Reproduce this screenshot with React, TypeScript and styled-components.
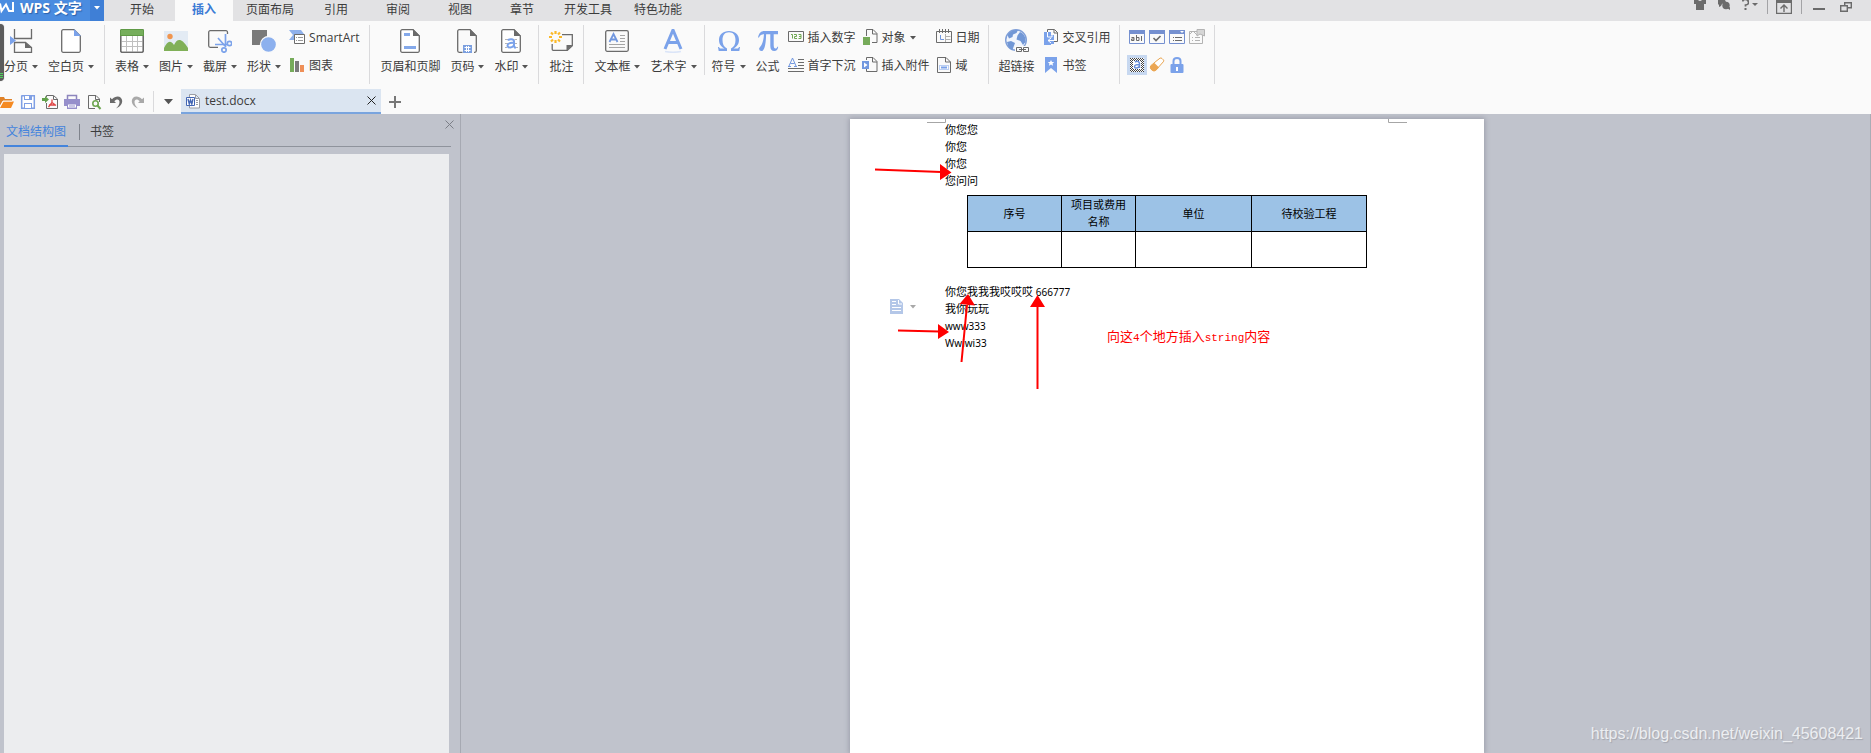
import React from "react";
import styled, { createGlobalStyle } from "styled-components";

const GlobalStyle = createGlobalStyle`
  * { box-sizing: border-box; }
  body {
    margin: 0;
    font-family: "Open Sans", "Noto Sans CJK SC", sans-serif;
    font-size: 12px;
    color: #3c3c3c;
  }
  button {
    font: inherit;
    color: inherit;
    border: 0;
    background: none;
    padding: 0;
    white-space: nowrap;
  }
  svg { display: block; flex: none; }
`;

const Shell = styled.div`
  position: relative;
  display: flex;
  flex-direction: column;
  min-height: 100vh;
  overflow: hidden;
  background: #c0c3cc;
`;

/* ---------- menu bar ---------- */

const MenuBar = styled.header`
  display: flex;
  height: 21px;
  background: #e2e2e4;
`;

const Brand = styled.button`
  display: flex;
  gap: 6px;
  width: 90px;
  height: 21px;
  background: #4a8ce0;
  color: #fff;
  font-size: 14px;
  font-weight: 700;
  line-height: 16px;
  text-shadow: 1px 1px 1px #2b62ab;
`;

const BrandMenu = styled.button`
  display: flex;
  justify-content: center;
  width: 14px;
  height: 21px;
  padding-top: 6px;
  background: #3f7fd6;
`;

const Tabs = styled.nav`
  display: flex;
  flex: 1;
  gap: 4px;
  padding-left: 9px;
`;

const Tab = styled.button<{ $active?: boolean; $wide?: boolean }>`
  width: ${(p) => (p.$wide ? 66 : 58)}px;
  height: 21px;
  padding-bottom: 1px;
  line-height: 20px;
  background: ${(p) => (p.$active ? "#fafafa" : "transparent")};
  color: ${(p) => (p.$active ? "#3a7bd5" : "#3c3c3c")};
  font-weight: ${(p) => (p.$active ? 700 : 400)};
`;

const WindowTools = styled.div`
  display: flex;
  align-items: flex-start;
  padding-right: 19px;
  color: #6b6b6b;
`;

const ToolButton = styled.button<{ $before: number }>`
  display: flex;
  gap: 3px;
  margin-left: ${(p) => p.$before}px;
`;

const ToolDivider = styled.span`
  width: 1px;
  height: 14px;
  margin-left: 9px;
  background: #a3a3a6;
`;

/* ---------- ribbon ---------- */

const Ribbon = styled.div`
  display: flex;
  height: 68px;
  margin-left: -1px;
  padding-top: 4px;
  background: #fafafa;
`;

const Group = styled.div<{ $left?: number; $right?: number; $short?: boolean }>`
  display: flex;
  align-items: flex-start;
  height: ${(p) => (p.$short ? 50 : 59)}px;
  padding: 0 ${(p) => p.$right ?? 5}px 0 ${(p) => p.$left ?? 5}px;
  border-right: 1px solid #dadadc;
`;

const BigButton = styled.button`
  display: flex;
  flex-direction: column;
  align-items: center;
  gap: 4px;
  padding: 4px 5px 0;
`;

const Label = styled.span`
  display: flex;
  align-items: center;
  gap: 4px;
  padding-top: 1px;
  line-height: 18px;
`;

const Stack = styled.div`
  display: flex;
  flex-direction: column;
  gap: 8px;
  padding-top: 2px;
`;

const SmallButton = styled.button`
  display: flex;
  align-items: center;
  gap: 4px;
  height: 20px;
  padding: 0 3px;
`;

const IconGrid = styled.div`
  display: grid;
  grid-template-columns: repeat(4, 20px);
  gap: 8px 0;
  padding-top: 2px;
`;

const IconCell = styled.button<{ $on?: boolean }>`
  display: flex;
  align-items: center;
  justify-content: center;
  height: 20px;
  background: ${(p) => (p.$on ? "#c7d8f0" : "transparent")};
`;

const DockHandle = styled.div`
  position: absolute;
  left: 0;
  top: 24px;
  width: 4px;
  height: 57px;
  padding-top: 49px;
  border-radius: 0 4px 4px 0;
  background: #5c5c5c;
  box-shadow: 0 0 1px #888;
`;

/* ---------- quick access bar ---------- */

const QuickBar = styled.div`
  display: flex;
  align-items: center;
  height: 25px;
  background: #fafafa;
`;

const QuickTools = styled.div`
  display: flex;
  align-items: center;
  gap: 6px;
  padding-right: 7px;
`;

const QuickDivider = styled.span`
  width: 1px;
  height: 21px;
  background: #dadadc;
`;

const QuickMore = styled.button`
  padding: 0 8px 0 10px;
`;

const DocTab = styled.div`
  display: flex;
  align-items: center;
  width: 200px;
  height: 25px;
  padding: 0 5px;
  border-bottom: 2px solid #79a4de;
  background: #dbe5f1;
`;

const DocTabName = styled.button`
  display: flex;
  flex: 1;
  align-items: center;
  gap: 5px;
  padding-top: 1px;
  line-height: 22px;
`;

const AddTab = styled.button`
  padding-left: 8px;
`;

/* ---------- workspace ---------- */

const Workspace = styled.main`
  display: flex;
  flex: 1;
`;

const SidePanel = styled.aside`
  display: flex;
  flex-direction: column;
  width: 461px;
  border-right: 1px solid #a6a9b2;
`;

const SideHead = styled.div`
  display: flex;
  justify-content: space-between;
  height: 33px;
  margin: 0 9px 0 4px;
  border-bottom: 1px solid #8f939c;
`;

const SideTabs = styled.div`
  display: flex;
  align-items: flex-start;
`;

const SideTab = styled.button<{ $active?: boolean }>`
  height: 33px;
  padding: 3px 2px 0;
  line-height: 30px;
  color: ${(p) => (p.$active ? "#4484dc" : "#3c3c3c")};
  border-bottom: 2px solid ${(p) => (p.$active ? "#4484dc" : "transparent")};
`;

const SideDivider = styled.span`
  width: 1px;
  height: 16px;
  margin: 10px 8px 0 11px;
  background: #7f838c;
`;

const SideClose = styled.button`
  align-self: flex-start;
  margin-right: -3px;
  padding-top: 6px;
`;

const Outline = styled.div`
  flex: 1;
  margin: 7px 11px 0 4px;
  background: #ecedef;
`;

const Canvas = styled.section`
  position: relative;
  display: flex;
  flex: 1;
  justify-content: center;
  padding: 5px 0 0 3px;
  border-right: 1px solid #a9acb5;
`;

const Page = styled.article`
  position: relative;
  width: 634px;
  padding: 2px 95px 0;
  background: #fff;
  box-shadow: 0 0 5px 1px #9b9eaa;
  color: #000;
  font-size: 11px;
  font-family: "Noto Sans", "Noto Sans CJK SC", sans-serif;
`;

const Para = styled.p`
  height: 17px;
  margin: 0;
  line-height: 17px;
`;

const Latin = styled.span`
  font-size: 10px;
`;

const DocTable = styled.table`
  width: 400px;
  margin: 6px 0 15px 22px;
  border-collapse: collapse;
  table-layout: fixed;
  line-height: 17px;

  th, td {
    height: 36px;
    padding: 0 8px 1px;
    border: 1px solid #000;
    font-weight: 400;
    text-align: center;
  }
  th { height: 35px; background: #9cc2e6; }
`;

const Arrows = styled.svg`
  position: absolute;
  left: 0;
  top: 0;
`;

const PasteOptions = styled.button`
  position: absolute;
  left: 40px;
  top: 180px;
  display: flex;
  align-items: center;
  gap: 7px;
`;

const Note = styled.div`
  position: absolute;
  left: 257px;
  top: 207px;
  color: #f00;
  font-size: 13px;
  line-height: 20px;
  white-space: nowrap;
  font-family: "Noto Sans CJK SC", sans-serif;
`;

const NoteLatin = styled.span`
  font-size: 11px;
  font-family: "Liberation Mono", monospace;
`;

const Watermark = styled.div`
  position: absolute;
  right: 7px;
  bottom: 9px;
  color: #eceef1;
  font: 16px/20px "Liberation Sans", sans-serif;
  text-shadow: 1px 1px 1px #a3a6af;
`;

/* ---------- drawings ---------- */

const G = "#6b6b6b";
const B = "#7ba2ea";

const Caret = ({ color = "#555", w = 6 }: { color?: string; w?: number }) => (
  <svg width={w} height={w === 6 ? 4 : 6} viewBox="0 0 6 4"><path d="M0 0h6L3 3.5z" fill={color} /></svg>
);

const Big = ({ children }: { children: React.ReactNode }) => (
  <svg width="24" height="24" viewBox="0 0 24 24" fill="none" stroke={G} strokeWidth="1.3">{children}</svg>
);

const Sm = ({ children }: { children: React.ReactNode }) => (
  <svg width="16" height="16" viewBox="0 0 16 16" fill="none" stroke={G} strokeWidth="1">{children}</svg>
);

const FoldPage = ({ fold = G }: { fold?: string }) => (
  <>
    <path d="M15 .7H4.2a1.5 1.5 0 0 0-1.5 1.5v19.6a1.5 1.5 0 0 0 1.5 1.5h15.6a1.5 1.5 0 0 0 1.5-1.5V7z" fill="#fff" />
    <path d="M15 0v7h7z" fill={fold} stroke="none" />
  </>
);

const icons = {
  pageBreak: (
    <Big>
      <path d="M5.500 0v9.500h17V0M5.500 23.300V13.500h11l6 5v4.800z" />
      <path d="M16 13v6h6.500z" fill={G} stroke="none" />
      <path d="M1 7v9l6-4.500z" fill={B} stroke="none" />
    </Big>
  ),
  blank: <Big><FoldPage fold={B} /></Big>,
  table: (
    <Big>
      <rect x=".7" y=".7" width="22.6" height="22.6" rx="1.5" fill="#fff" />
      <path d="M1 12.500h22M1 17.500h22M6.500 7v16M12.500 7v16M17.500 7v16" stroke="#c0c0c0" strokeWidth="1" />
      <rect x=".7" y=".7" width="22.6" height="22.6" rx="1.5" />
      <path d="M1.500 0h21q1.500 0 1.500 1.500V7H0V1.500Q0 0 1.500 0z" fill="#5f9a46" stroke="none" />
      <path d="M1 1h22v5H1z" fill="#76ae5c" stroke="none" />
    </Big>
  ),
  picture: (
    <Big>
      <g stroke="none">
        <path d="M0 2h24v20H0z" fill="#e3ebf4" />
        <circle cx="6" cy="7.5" r="2.7" fill="#f0954f" />
        <path d="M0 22v-3c3-6 6-9 10-3 3-6 7-8 14 3v3z" fill="#80b058" />
      </g>
    </Big>
  ),
  capture: (
    <Big>
      <path d="M19.5 5V3.200a1.500 1.500 0 0 0-1.500-1.500H2.200a1.500 1.500 0 0 0-1.500 1.500v13.600a1.500 1.500 0 0 0 1.500 1.500H10" />
      <g stroke={B} strokeWidth="1.700">
        <path d="M17.500 5v13M7 15.500h12" />
        <path d="m10 9 7 8" />
        <circle cx="16" cy="21" r="2.200" />
        <circle cx="21.500" cy="14.500" r="2.200" />
      </g>
    </Big>
  ),
  shapes: (
    <Big>
      <path d="M0 1h15v15H0z" fill="#7a7a7a" stroke="none" />
      <circle cx="16.500" cy="15.500" r="8" fill="#8cb0ee" stroke="#fafafa" />
    </Big>
  ),
  headerFooter: (
    <Big>
      <FoldPage />
      <path d="M6 5.500h6M6 18.500h12" stroke="#84a9ea" strokeWidth="3" />
    </Big>
  ),
  pageNumber: (
    <Big>
      <path d="M7.500 23.300H4.200a1.500 1.500 0 0 1-1.500-1.500V2.200A1.500 1.500 0 0 1 4.200.7H15L21.300 7v14.800a1.500 1.500 0 0 1-1.500 1.500H19" />
      <path d="M15 0v7h7z" fill={G} stroke="none" />
      <path d="M8 16h9v8H8z" fill="#7b9fdf" stroke="none" />
      <path d="M11.500 17v6M13.500 17v6M9.500 18.500h6M9.500 21.500h6" stroke="#fff" strokeWidth="1" />
    </Big>
  ),
  watermark: (
    <Big>
      <FoldPage />
      <path d="M6 10.500h3M15.500 10.500H18M6 14.500h3M16 14.500h2M6 18.500h2M17 18.500h2" stroke="#b5b5b5" strokeWidth="1" />
      <path d="M9 11.500c1-1.500 6-2 6 1v6M15 14c-4-.500-6.500.500-6.500 2.500 0 3 5.500 2.500 6.500-.500M15 18.500h2" stroke={B} strokeWidth="2" />
    </Big>
  ),
  comment: (
    <Big>
      <path d="M13 5.700h10.300v11l-5 4.600H4.200a1 1 0 0 1-1-1V15" />
      <path d="M23.500 16h-6v6z" fill={G} stroke="none" />
      <path d="M6.500 2v3M6.500 11v3M0 8h3M10 8h3M2 3.500l2 2M9 10.500l2 2M11 3.500l-2 2M4 10.500l-2 2" stroke="#fbb929" strokeWidth="2.200" />
    </Big>
  ),
  textBox: (
    <Big>
      <rect x=".7" y="1.700" width="22.600" height="20.600" rx="1.500" />
      <path d="m4.500 13 4-8 4 8M6 10.500h5" stroke="#7197df" strokeWidth="1.800" />
      <path d="M15 6.500h5M15 9.500h5M15 12.500h5M4 15.500h16M4 18.500h16" stroke="#a5a5a5" strokeWidth="1" />
    </Big>
  ),
  wordArt: (
    <Big>
      <path d="M4 20 12 1l8 19M7 13.500h10" stroke={B} strokeWidth="3" />
      <path d="M4 22.500c5 1 11 1 16 0" stroke="#dbe5f8" strokeWidth="1.500" />
    </Big>
  ),
  omega: (
    <Big>
      <path
        d="M1 18h1c.5 1.300 1 1.500 2 1.500h3.500C3.500 17.500 2 14.500 2 11 2 5.500 6 2 12 2s10 3.500 10 9c0 3.500-1.500 6.500-5.500 8.500H20c1 0 1.500-.2 2-1.500h1l-.7 4H14v-2.500c3.200-1.500 4.500-4.500 4.500-8.500 0-5-2.500-7.700-6.500-7.700S5.500 6 5.500 11c0 4 1.300 7 4.500 8.500V22H1.700z"
        fill={B}
        stroke="none"
      />
    </Big>
  ),
  pi: (
    <Big>
      <path
        d="M2 8.500C3 4 5 2 8.500 2H22v3.300h-4.300V16c0 2.500.6 3.500 1.800 3.500 1 0 1.500-.7 1.700-1.800h1C22 20.500 20.500 22 18.300 22c-2.600 0-4-1.700-4-5V5.300h-4.200C10 13 9 22 5.500 22 4 22 3.200 21 3.200 20c0-2.500 3.800-2 4.800-14.700-2.500 0-4 .7-5 3.200z"
        fill={B}
        stroke="none"
      />
    </Big>
  ),
  link: (
    <Big>
      <circle cx="11" cy="11" r="10.300" fill="#f1f5fc" stroke="#7f9fd8" strokeWidth="1.400" />
      <path d="M2.500 6C5 2 9 .5 13 1l-1.500 3L8 5.500 7.500 8 4 9.500zM2 13l4-1 4 2-1.500 4-1 3C4.500 20 2.500 17 2 13zM15 3c4 1.500 6 5 5.500 10L18 16l-2.500-4-4-1.500 1-4z" fill="#7197d6" stroke="none" />
      <path d="M10 17h14v7H10z" fill="#fafafa" stroke="none" />
      <path d="M11.500 18.500h5v4h-5zM18.500 18.500h5v4h-5zM14 20.500h7" strokeWidth="1" />
    </Big>
  ),
  smartArt: (
    <Sm>
      <path d="M0 1h12l3 4H6v6H0l4-5z" fill="#8fb1ec" stroke="none" />
      <path d="M5.500 5.500h10v9h-10z" fill="#fff" />
      <path d="M7 8.500h1M9 8.500h5M7 11.500h1M9 11.500h5" stroke="#999" />
    </Sm>
  ),
  chart: (
    <Sm>
      <g stroke="none">
        <path d="M1 1h4v14H1z" fill="#76ab5a" />
        <path d="M6 4h4v11H6z" fill="#7b7b7b" />
        <path d="M11 8h4v7h-4z" fill="#ef8f57" />
      </g>
    </Sm>
  ),
  number: (
    <Sm>
      <path d="M.5 2.500h15v10H.5z" />
      <path d="M3 5.500h1.500v4M6 5.500h2.500v2H6.500v2H9M10.500 5.500h2.500v4h-2.500M11 7.500h2" stroke="#70a853" />
    </Sm>
  ),
  dropCap: (
    <Sm>
      <path d="M10 2.500h6M10 5.500h6M10 8.500h6M0 11.500h16M0 14.500h16" />
      <path d="M1 9 4.500 1 8 9M2.500 6.500h4M0 9.500h3M6 9.500h3" stroke="#7197df" />
    </Sm>
  ),
  object: (
    <Sm>
      <path d="M4.500 7V.5H11l4 4v9h-5M10.500 1v4H15" />
      <path d="M1 8h7v8H1z" fill="#76ab5a" stroke="none" />
    </Sm>
  ),
  attachment: (
    <Sm>
      <path d="M4.500 3V.5H11l4 4v10H4.500V12M10.500 1v4H15" />
      <path d="M0 4h7v8H0z" fill="#7298df" stroke="none" />
      <path d="m2 5.500 3.500 2.500L2 10.500z" fill="#fff" stroke="none" />
    </Sm>
  ),
  date: (
    <Sm>
      <path d="M.5 2.500h15v11H.5zM3.500 0v4M6.500 0v4M9.500 0v4M12.500 0v4" />
      <path d="M9.500 5v8M9.500 7.500h5M9.500 10.500h5" stroke="#b0b0b0" />
      <path d="M4.500 6v4.500H8" stroke="#7197df" />
    </Sm>
  ),
  field: (
    <Sm>
      <path d="M1.500 15.500V.5H10l4.500 4.500v10.500zM9.500 1v4h5" />
      <path d="M3.500 8.500h9v4h-9z" stroke={B} strokeDasharray="1 1" />
      <path d="M5 10.500h6" stroke={B} strokeWidth="2" />
    </Sm>
  ),
  crossRef: (
    <Sm>
      <path d="M1 3h7v13H1z" fill="#7ba2ea" stroke="none" />
      <path d="M4.500 3V.5h7l3 3v9H10" fill="#fafafa" />
      <path d="M11 1v3h4" />
      <path d="M4 3h4v3h3v9H4z" fill="#7ba2ea" stroke="none" />
      <path d="M5 11.500h9M8 9l-3 2.500L8 14" stroke="#fff" />
      <path d="M4.500 3v5H9V6" stroke="#fff" />
    </Sm>
  ),
  bookmark: (
    <Sm>
      <path d="M2 0h12v16l-6-5-6 5z" fill="#7ba2ea" stroke="none" />
      <path d="m8 3 1 2h2.200L9.500 6.500l.6 2.300L8 7.500 5.900 8.800l.6-2.300L4.800 5H7z" fill="#fff" stroke="none" />
    </Sm>
  ),
  fieldText: (
    <Sm>
      <path d="M.5 1.500h15v13H.5z" stroke="#7590d0" /><path d="M0 1h16v4H0z" fill="#7590d0" stroke="none" />
      <path d="M2.500 8.500H5v3H2.500V10H5M7.500 6v5.500H10v-3H7.500M12.500 7v5" />
    </Sm>
  ),
  fieldCheck: (
    <Sm>
      <path d="M.5 1.500h15v13H.5z" stroke="#7590d0" /><path d="M0 1h16v4H0z" fill="#7590d0" stroke="none" />
      <path d="m4.500 9 2.500 2.500L11.500 7" strokeWidth="1.600" />
    </Sm>
  ),
  fieldList: (
    <Sm>
      <path d="M.5 1.500h15v13H.5z" stroke="#7590d0" /><path d="M0 1h16v4H0z" fill="#7590d0" stroke="none" />
      <path d="M11 2h4l-2 2z" fill="#fff" stroke="none" />
      <path d="M4 8.500h1M6 8.500h7M4 11.500h1M6 11.500h7" />
    </Sm>
  ),
  properties: (
    <Sm>
      <g stroke="#b3b3b3">
        <path d="M.5 2.500h13v12H.5zM3 8.500h1M6 8.500h5M3 11.500h1M6 11.500h5" />
        <path d="M8 .5h7.500V7L11 5 8 7z" fill="#d6d6d6" />
        <path d="m1 5 3-3 4 4" />
      </g>
    </Sm>
  ),
  shading: (
    <Sm>
      <path d="M1 1h14v14H1z" fill="#fff" stroke="none" />
      <g stroke="#444" strokeDasharray="1 1">
        <path d="M1 1.500h14M2 2.500h13M1 3.500h14M2 12.500h13M1 13.500h14M2 14.500h13" />
        <path d="M1.500 5v8M2.500 4v9M3.500 5v8M12.500 4v9M13.500 5v8M14.500 4v9" />
      </g>
      <path d="M4 4h8v8H4z" fill="#fff" stroke="none" />
      <path d="M6 5c2-1.200 4.500-.6 4.500 1.500V11M10.500 7.500c-3 0-5 .5-5 2.200 0 2 4 1.800 5-.7" stroke="#6b8fd8" strokeWidth="1.500" />
    </Sm>
  ),
  eraser: (
    <Sm>
      <path d="M8 3.500 11 1.200q1-.700 2 .300l1.300 1.300q1 1 0 2L7 13q-2 2-4 0l-1-1q-1.500-2 0-3.500z" fill="#fff" stroke="#e9a44f" />
      <path d="M5.500 6 10 10.500 7 13.500q-2 1.500-4 0l-1.500-1.800q-1-1.700.5-3.200z" fill="#eba653" stroke="none" />
    </Sm>
  ),
  lock: (
    <Sm>
      <path d="M4.500 8V4q0-3 3.500-3t3.500 3v4" stroke={B} strokeWidth="2" />
      <rect x="1.500" y="7" width="13" height="9" rx="1" fill={B} stroke="none" />
      <path d="M8 10v4" stroke="#fff" strokeWidth="2" />
    </Sm>
  ),
  open: (
    <svg width="14" height="16" viewBox="0 0 14 16">
      <path d="M0 3h4l1 2h7v2H3L0 12z" fill="#e08228" />
      <path d="M3.500 7.500H14L11 14H0z" fill="#f58a22" />
      <path d="M0 12.500 3 7h9" fill="none" stroke="#fafafa" />
    </svg>
  ),
  save: (
    <Sm>
      <path d="M2 1.700h12.300v12.600H1.700V2z" fill="#fff" stroke="#7f9fe4" strokeWidth="1.500" />
      <path d="M4 1h8v5H4zM4 9h8v5H4z" fill="#7f9fe4" stroke="none" />
      <path d="M5 2h4v3H5zM5 10h6v4H5z" fill="#fff" stroke="none" />
    </Sm>
  ),
  pdf: (
    <Sm>
      <path d="M4.500 9v5.500h11V5l-4-3.500h-7V3M11.500 2v3.500H15" />
      <path d="M0 4h3V2l4 3.500L3 9V7H0z" fill="#62a04a" stroke="none" />
      <path d="M10 5.500v3L6.500 13M10 8.500l4 3M7 11h6" stroke="#e04545" strokeWidth="1.300" />
    </Sm>
  ),
  print: (
    <Sm>
      <path d="M3.500 5V1.500h9V5" stroke="#8d85bd" strokeWidth="1.500" />
      <path d="M0 5h16v7H0zM3 10h10v5H3z" fill="#968fcb" stroke="none" />
      <path d="M4 10.500h8v3H4z" fill="#fff" stroke="none" /><path d="M5 12h6" stroke="#968fcb" />
    </Sm>
  ),
  preview: (
    <Sm>
      <path d="M9 14.500H2.500V1.500H10l3.500 3.500v3M9.500 2v3.500H13" />
      <circle cx="9.500" cy="9.500" r="2.700" stroke="#6ea651" strokeWidth="1.600" />
      <path d="m11.500 11.500 3 3.500" stroke="#6ea651" strokeWidth="2" />
    </Sm>
  ),
  undo: (
    <Sm>
      <path d="M2 3.500v5.500h6L6.300 7.300C8.500 4.500 11.500 5 11.500 8c0 2.500-1.500 4.500-3.500 6.500C12 13 14.200 10 14.200 7 14.200 2 8 .5 4 5.300z" fill={G} stroke="none" />
    </Sm>
  ),
  redo: (
    <Sm>
      <path d="M14 3.500v5.500H8l1.700-1.700C7.500 4.500 4.500 5 4.500 8c0 2.500 1.500 4.500 3.500 6.500C4 13 1.800 10 1.800 7 1.800 2 8 .5 12 5.300z" fill="#a9a9a9" stroke="none" />
    </Sm>
  ),
};

const DocIcon = () => (
  <svg width="14" height="15" viewBox="0 0 14 15" fill="none" stroke="#9a9da4">
    <path d="M3.500 3V.5h6l4 4v9.500h-10V12M9.500 1v3.500H13" fill="#fff" />
    <path d="M10 6.500h2M10 8.500h2M10 10.500h2" />
    <path d="M.5 3.500h8v8h-8z" fill="#fff" stroke="#4467b4" />
    <path d="m2 5 1.300 5L4.500 6l1.300 4L7 5" stroke="#4467b4" strokeWidth="1.400" />
  </svg>
);

const Cross = ({ color }: { color: string }) => (
  <svg width="9" height="9" viewBox="0 0 9 9"><path d="m.5.5 8 8m0-8-8 8" stroke={color} /></svg>
);

type IconName = keyof typeof icons;

const Large = ({ icon, text, menu }: { icon: IconName; text: string; menu?: boolean }) => (
  <BigButton type="button">
    {icons[icon]}
    <Label>{text}{menu && <Caret />}</Label>
  </BigButton>
);

const Small = ({ icon, text, menu }: { icon: IconName; text: string; menu?: boolean }) => (
  <SmallButton type="button">
    {icons[icon]}
    <Label>{text}{menu && <Caret />}</Label>
  </SmallButton>
);

const menuTabs = ["开始", "插入", "页面布局", "引用", "审阅", "视图", "章节", "开发工具", "特色功能"];
const quickTools: [IconName, string][] = [
  ["open", "打开"], ["save", "保存"], ["pdf", "输出为PDF"], ["print", "打印"],
  ["preview", "打印预览"], ["undo", "撤销"], ["redo", "恢复"],
];
const fieldTools: [IconName, string][] = [
  ["fieldText", "文字型窗体域"], ["fieldCheck", "复选框型窗体域"], ["fieldList", "下拉型窗体域"],
  ["properties", "窗体域选项"], ["shading", "窗体域底纹"], ["eraser", "重新设置窗体域"], ["lock", "保护窗体"],
];

export default function App() {
  return (
    <Shell>
      <GlobalStyle />
      <MenuBar>
        <Brand type="button">
          <svg width="14" height="14" viewBox="0 0 14 14"><path d="M0 3.500 1.500 11 6 4.500l3 6.500h4V2" fill="none" stroke="#fff" strokeWidth="2" /></svg>
          WPS 文字
        </Brand>
        <BrandMenu type="button" aria-label="菜单"><Caret color="#fff" /></BrandMenu>
        <Tabs>
          {menuTabs.map((t) => (
            <Tab key={t} type="button" $wide={t.length > 2} $active={t === "插入"}>{t}</Tab>
          ))}
        </Tabs>
        <WindowTools>
          <ToolButton type="button" aria-label="皮肤" $before={0}>
            <svg width="12" height="10" viewBox="0 0 12 10"><path d="M0 0h4q2 2 4 0h4v4h-2v6H2V4H0z" fill={G} /></svg>
          </ToolButton>
          <ToolButton type="button" aria-label="论坛" $before={12}>
            <svg width="12" height="10" viewBox="0 0 12 10"><path d="M0 0h7l1 2-4 2-1 2-2 1V5L0 4z" fill={G} /><circle cx="8" cy="5.500" r="3.700" fill={G} /><path d="m9 8 3-1v3z" fill={G} /></svg>
          </ToolButton>
          <ToolButton type="button" aria-label="帮助" $before={12}>
            <svg width="7" height="10" viewBox="0 0 7 10"><path d="M.5 1.500Q1-.5 3.500-.5T6.500 2 3.500 5v1.500" fill="none" stroke={G} strokeWidth="1.700" /><path d="M2.500 8h2v2h-2z" fill={G} /></svg>
            <svg width="6" height="6" viewBox="0 0 6 6"><path d="M0 3h6L3 6z" fill={G} /></svg>
          </ToolButton>
          <ToolDivider />
          <ToolButton type="button" aria-label="隐藏功能区" $before={8}>
            <svg width="16" height="14" viewBox="0 0 16 14"><path d="M.5 0v13.500h15V0M8 12V5M4.500 8.500 8 5l3.500 3.500" fill="none" stroke={G} strokeWidth="1.400" /><path d="M0 0h16v3H0z" fill={G} /></svg>
          </ToolButton>
          <ToolDivider />
          <ToolButton type="button" aria-label="最小化" $before={11}>
            <svg width="12" height="12" viewBox="0 0 12 12"><path d="M0 8h12v2H0z" fill={G} /></svg>
          </ToolButton>
          <ToolButton type="button" aria-label="还原" $before={15}>
            <svg width="12" height="12" viewBox="0 0 12 12"><path d="M4.700 5V2.700h6.600v5H8M.7 5.700h6.600v5.600H.7z" fill="none" stroke={G} strokeWidth="1.400" /></svg>
          </ToolButton>
        </WindowTools>
      </MenuBar>

      <Ribbon>
        <Group $left={0}>
          <Large icon="pageBreak" text="分页" menu />
          <Large icon="blank" text="空白页" menu />
        </Group>
        <Group $right={7}>
          <Large icon="table" text="表格" menu />
          <Large icon="picture" text="图片" menu />
          <Large icon="capture" text="截屏" menu />
          <Large icon="shapes" text="形状" menu />
          <Stack>
            <Small icon="smartArt" text="SmartArt" />
            <Small icon="chart" text="图表" />
          </Stack>
        </Group>
        <Group>
          <Large icon="headerFooter" text="页眉和页脚" />
          <Large icon="pageNumber" text="页码" menu />
          <Large icon="watermark" text="水印" menu />
        </Group>
        <Group>
          <Large icon="comment" text="批注" />
        </Group>
        <Group $right={2} $short>
          <Large icon="textBox" text="文本框" menu />
          <Large icon="wordArt" text="艺术字" menu />
        </Group>
        <Group $left={2}>
          <Large icon="omega" text="符号" menu />
          <Large icon="pi" text="公式" />
          <Stack>
            <Small icon="number" text="插入数字" />
            <Small icon="dropCap" text="首字下沉" />
          </Stack>
          <Stack>
            <Small icon="object" text="对象" menu />
            <Small icon="attachment" text="插入附件" />
          </Stack>
          <Stack>
            <Small icon="date" text="日期" />
            <Small icon="field" text="域" />
          </Stack>
        </Group>
        <Group>
          <Large icon="link" text="超链接" />
          <Stack>
            <Small icon="crossRef" text="交叉引用" />
            <Small icon="bookmark" text="书签" />
          </Stack>
        </Group>
        <Group $left={7} $right={7}>
          <IconGrid>
            {fieldTools.map(([name, label]) => (
              <IconCell key={name} type="button" aria-label={label} $on={name === "shading"}>{icons[name]}</IconCell>
            ))}
          </IconGrid>
        </Group>
      </Ribbon>
      <DockHandle>
        <svg width="3" height="6" viewBox="0 0 3 6"><path d="M0 .5h3M0 2.500h3M0 4.500h3" stroke="#4fd15c" /></svg>
      </DockHandle>

      <QuickBar>
        <QuickTools>
          {quickTools.map(([name, label]) => (
            <button key={name} type="button" aria-label={label}>{icons[name]}</button>
          ))}
        </QuickTools>
        <QuickDivider />
        <QuickMore type="button" aria-label="自定义快速访问工具栏"><Caret w={9} /></QuickMore>
        <DocTab>
          <DocTabName type="button"><DocIcon />test.docx</DocTabName>
          <button type="button" aria-label="关闭文档"><Cross color="#222" /></button>
        </DocTab>
        <AddTab type="button" aria-label="新建">
          <svg width="12" height="12" viewBox="0 0 12 12"><path d="M6 0v12M0 6h12" stroke="#777" strokeWidth="2" /></svg>
        </AddTab>
      </QuickBar>

      <Workspace>
        <SidePanel>
          <SideHead>
            <SideTabs>
              <SideTab type="button" $active>文档结构图</SideTab>
              <SideDivider />
              <SideTab type="button">书签</SideTab>
            </SideTabs>
            <SideClose type="button" aria-label="关闭"><Cross color="#7b7e86" /></SideClose>
          </SideHead>
          <Outline />
        </SidePanel>
        <Canvas>
          <Page>
            <Para>你您您</Para>
            <Para>你您</Para>
            <Para>你您</Para>
            <Para>您问问</Para>
            <DocTable>
              <colgroup>
                <col style={{ width: 94 }} />
                <col style={{ width: 74 }} />
                <col style={{ width: 116 }} />
                <col style={{ width: 115 }} />
              </colgroup>
              <thead>
                <tr><th>序号</th><th>项目或费用名称</th><th>单位</th><th>待校验工程</th></tr>
              </thead>
              <tbody>
                <tr><td /><td /><td /><td /></tr>
              </tbody>
            </DocTable>
            <Para>你您我我我哎哎哎 <Latin>666777</Latin></Para>
            <Para>我你玩玩</Para>
            <Para><Latin>www333</Latin></Para>
            <Para><Latin>Wwiwi33</Latin></Para>
            <PasteOptions type="button" aria-label="粘贴选项">
              <svg width="13" height="15" viewBox="0 0 13 15">
                <path d="M0 0h9l4 4v11H0z" fill="#b4c7e8" />
                <path d="M8.500 1v4H12M2 2.500h4M2 5.500h4M2 8.500h9M2 11.500h9" stroke="#fff" fill="none" />
              </svg>
              <Caret color="#a8a8a8" />
            </PasteOptions>
            <Note>向这<NoteLatin>4</NoteLatin>个地方插入<NoteLatin>string</NoteLatin>内容</Note>
            <Arrows width="634" height="280" viewBox="0 0 634 280" pointerEvents="none">
              <path d="M77 3.500h18.500V0M538.500 0v3.500H557" fill="none" stroke="#a6a6a6" />
              <g stroke="#f00" strokeWidth="2">
                <path d="m25 50.500 66 2.500M48 211.500l41 1M111.500 243l5.500-57M187.500 270v-83" />
              </g>
              <g fill="#f00">
                <path d="M90 45v16l11.500-7.500zM88 205v15l11-7zM109.500 185l15.500 1.500L118 175zM180 188h15l-7.500-12z" />
              </g>
            </Arrows>
          </Page>
          <Watermark>https://blog.csdn.net/weixin_45608421</Watermark>
        </Canvas>
      </Workspace>
    </Shell>
  );
}
